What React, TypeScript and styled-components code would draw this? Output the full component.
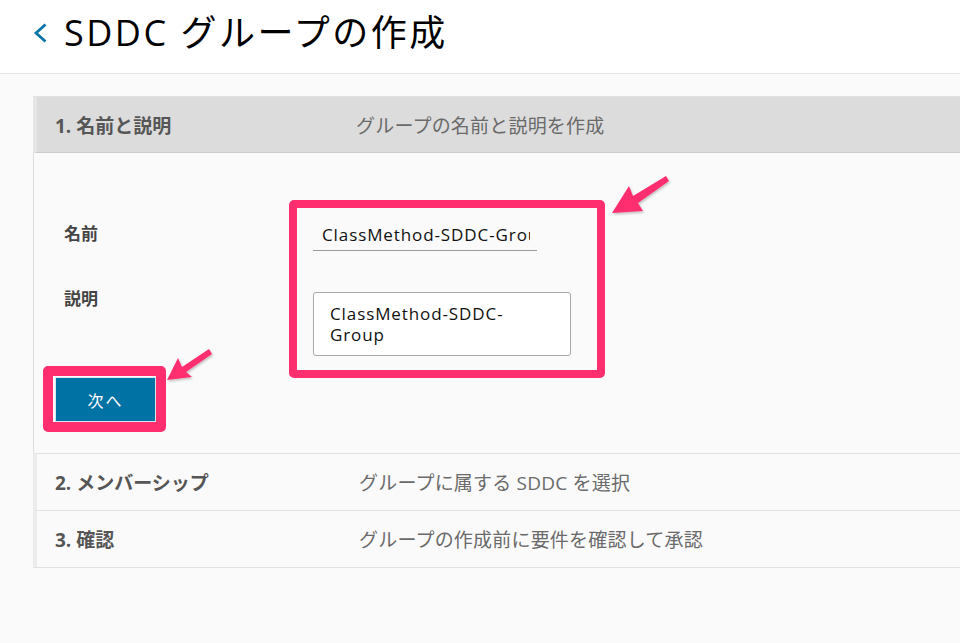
import React from "react";
import styled, { createGlobalStyle } from "styled-components";

const PINK = "#ff2f6f";
const FONT = `"Open Sans", "Noto Sans CJK JP", sans-serif`;

const GlobalStyle = createGlobalStyle`
  html, body { margin: 0; padding: 0; background: #fafafa; }
  body { font-family: ${FONT}; color: #333; overflow: hidden; }
  * { box-sizing: border-box; }
`;

const Page = styled.div`
  position: relative;
  width: 960px;
  height: 643px;
  background: #fafafa;
  overflow: hidden;
`;

const Header = styled.header`
  height: 74px;
  background: #ffffff;
  border-bottom: 1px solid #e6e6e6;
  display: flex;
  align-items: center;
  padding: 0 0 7px 33px;
`;

const BackIcon = styled.svg`
  width: 15px;
  height: 20px;
  flex: none;
`;

const Title = styled.h1`
  margin: 0 0 0 16px;
  font-family: ${FONT};
  font-weight: 400;
  font-size: 36px;
  line-height: 44px;
  color: #000;
  letter-spacing: 2.5px;
`;

const Main = styled.main`
  padding: 22px 0 0 33px;
`;

const Panel = styled.section`
  border-top: 1px solid #e2e2e2;
  border-bottom: 1px solid #e2e2e2;
  background: #fafafa;
`;

const StepHeader = styled.div<{ $active?: boolean }>`
  height: ${(p) => (p.$active ? "56px" : "57px")};
  display: grid;
  grid-template-columns: ${(p) => (p.$active ? "301px" : "304px")} 1fr;
  align-items: center;
  padding-left: 18px;
  background: ${(p) => (p.$active ? "#dcdcdc" : "#fafafa")};
  border-left: 4px solid ${(p) => (p.$active ? "#e6e6e6" : "#ececec")};
  border-top: ${(p) => (p.$active ? "none" : "1px solid #e2e2e2")};
  border-bottom: ${(p) => (p.$active ? "1px solid #cccccc" : "none")};
`;

const StepTitle = styled.span`
  font-size: 19px;
  font-weight: 700;
  color: #565656;
`;

const StepDesc = styled.span`
  font-size: 19px;
  font-weight: 400;
  color: #6a6a6a;
  letter-spacing: 0.2px;
`;

const StepBody = styled.div`
  border-left: 1px solid #dedede;
  padding: 47px 0 21px 9px;
`;

const FormRow = styled.div`
  display: flex;
  align-items: flex-start;
`;

const Labels = styled.div`
  width: 246px;
  padding: 23px 0 0 21px;
  display: flex;
  flex-direction: column;
  gap: 44px;
`;

const Label = styled.label`
  font-size: 17px;
  font-weight: 700;
  line-height: 21px;
  color: #444;
`;

const Highlight = styled.div<{ $pad: string; $border: number }>`
  border: ${(p) => p.$border}px solid ${PINK};
  border-radius: 5px;
  padding: ${(p) => p.$pad};
  display: inline-flex;
  flex-direction: column;
  align-items: flex-start;
`;

const TextInput = styled.input`
  display: block;
  width: 224px;
  height: 32px;
  margin: 0;
  padding: 0 7px 0 9px;
  border: none;
  border-bottom: 1px solid #9a9a9a;
  background: transparent;
  outline: none;
  font-family: ${FONT};
  font-size: 17px;
  letter-spacing: 0.9px;
  color: #111;
`;

const TextArea = styled.textarea`
  display: block;
  margin: 41px 0 0 0;
  width: 258px;
  height: 64px;
  padding: 10px 16px 0 16px;
  background: #ffffff;
  border: 1px solid #a8a8a8;
  border-radius: 3px;
  outline: none;
  resize: none;
  overflow: hidden;
  font-family: ${FONT};
  font-size: 17px;
  letter-spacing: 0.9px;
  line-height: 21px;
  color: #111;
`;

const ButtonWrap = styled.div`
  margin-top: -12px;
`;

const PrimaryButton = styled.button`
  width: 101px;
  height: 45px;
  background: #0072a3;
  border: 1px solid #d8e6ee;
  color: #ffffff;
  font-family: ${FONT};
  font-size: 16px;
  letter-spacing: 2px;
  cursor: pointer;
`;

const Arrows = styled.svg`
  position: absolute;
  left: 0;
  top: 0;
  width: 960px;
  height: 643px;
  pointer-events: none;
`;

const steps = [
  { title: "2. メンバーシップ", desc: "グループに属する SDDC を選択" },
  { title: "3. 確認", desc: "グループの作成前に要件を確認して承認" },
];

export default function App() {
  return (
    <Page>
      <GlobalStyle />
      <Header>
        <BackIcon viewBox="0 0 15 20">
          <polyline
            points="12.5,1.5 3,10 12.5,18.5"
            fill="none"
            stroke="#0a74a8"
            strokeWidth="2.8"
          />
        </BackIcon>
        <Title>SDDC グループの作成</Title>
      </Header>
      <Main>
        <Panel>
          <StepHeader $active>
            <StepTitle>1. 名前と説明</StepTitle>
            <StepDesc>グループの名前と説明を作成</StepDesc>
          </StepHeader>
          <StepBody>
            <FormRow>
              <Labels>
                <Label htmlFor="group-name">名前</Label>
                <Label htmlFor="group-desc">説明</Label>
              </Labels>
              <Highlight $border={8} $pad="11px 26px 14px 16px">
                <TextInput id="group-name" readOnly value="ClassMethod-SDDC-Group" />
                <TextArea id="group-desc" readOnly value="ClassMethod-SDDC-Group" />
              </Highlight>
            </FormRow>
            <ButtonWrap>
              <Highlight $border={10} $pad="1px 0 0 2px">
                <PrimaryButton>次へ</PrimaryButton>
              </Highlight>
            </ButtonWrap>
          </StepBody>
          {steps.map((s) => (
            <StepHeader key={s.title}>
              <StepTitle>{s.title}</StepTitle>
              <StepDesc>{s.desc}</StepDesc>
            </StepHeader>
          ))}
        </Panel>
      </Main>
      <Arrows viewBox="0 0 960 643">
        <defs>
          <filter id="sh" x="-20%" y="-20%" width="140%" height="140%">
            <feDropShadow dx="1" dy="1.5" stdDeviation="1" floodColor="#000" floodOpacity="0.25" />
          </filter>
        </defs>
        <polygon
          points="612,213 629,186 633,196 666,176 669,181 638,203 643,211"
          fill={PINK}
          filter="url(#sh)"
        />
        <polygon
          points="167,380 178,358 182,367 209,349 212,354 186,372 192,377"
          fill={PINK}
          filter="url(#sh)"
        />
      </Arrows>
    </Page>
  );
}
